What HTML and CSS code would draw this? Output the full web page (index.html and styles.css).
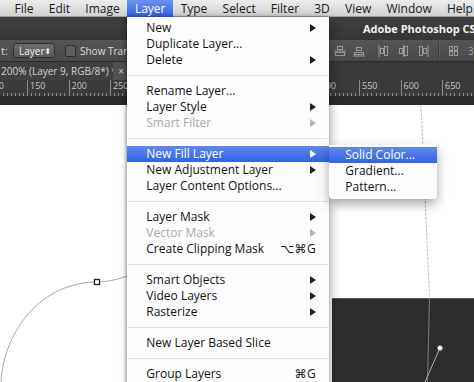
FILE: index.html
```html
<!DOCTYPE html>
<html lang="en">
<head>
    <meta charset="UTF-8">
    <meta name="viewport" content="width=device-width, initial-scale=1.0">
    <title>Photoshop - Layer menu</title>
    <link rel="stylesheet" href="styles.css">
</head>
<body>
    <div class="menubar">
        <span class="menubar-item">File</span>
        <span class="menubar-item">Edit</span>
        <span class="menubar-item">Image</span>
        <span class="menubar-item active">Layer
            <div class="dropdown">
                <div class="menu-item">New<i class="arrow"></i></div>
                <div class="menu-item">Duplicate Layer...</div>
                <div class="menu-item">Delete<i class="arrow"></i></div>
                <div class="menu-sep"></div>
                <div class="menu-item">Rename Layer...</div>
                <div class="menu-item">Layer Style<i class="arrow"></i></div>
                <div class="menu-item disabled">Smart Filter<i class="arrow"></i></div>
                <div class="menu-sep"></div>
                <div class="menu-item selected">New Fill Layer<i class="arrow"></i>
                    <div class="submenu">
                        <div class="menu-item selected">Solid Color...</div>
                        <div class="menu-item">Gradient...</div>
                        <div class="menu-item">Pattern...</div>
                    </div>
                </div>
                <div class="menu-item">New Adjustment Layer<i class="arrow"></i></div>
                <div class="menu-item">Layer Content Options...</div>
                <div class="menu-sep"></div>
                <div class="menu-item">Layer Mask<i class="arrow"></i></div>
                <div class="menu-item disabled">Vector Mask<i class="arrow"></i></div>
                <div class="menu-item">Create Clipping Mask<span class="shortcut">⌥⌘G</span></div>
                <div class="menu-sep"></div>
                <div class="menu-item">Smart Objects<i class="arrow"></i></div>
                <div class="menu-item">Video Layers<i class="arrow"></i></div>
                <div class="menu-item">Rasterize<i class="arrow"></i></div>
                <div class="menu-sep"></div>
                <div class="menu-item">New Layer Based Slice</div>
                <div class="menu-sep"></div>
                <div class="menu-item">Group Layers<span class="shortcut">⌘G</span></div>
            </div>
        </span>
        <span class="menubar-item">Type</span>
        <span class="menubar-item">Select</span>
        <span class="menubar-item">Filter</span>
        <span class="menubar-item">3D</span>
        <span class="menubar-item">View</span>
        <span class="menubar-item">Window</span>
        <span class="menubar-item">Help</span>
    </div>

    <div class="titlebar">Adobe Photoshop CS6 Extended</div>

    <div class="options">
        <span class="opt-label">t:</span>
        <span class="opt-select">Layer <span class="updown">⬍</span></span>
        <span class="opt-check"></span>
        <span class="opt-text">Show Transform Controls</span>
        <div class="align-icons">
            <svg width="12" height="12" viewBox="0 0 12 12"><rect x="3.5" y="1.5" width="5" height="3" /><rect x="1.5" y="7.5" width="9" height="3" /><line x1="0" y1="6" x2="12" y2="6" /></svg>
            <svg class="tight" width="12" height="12" viewBox="0 0 12 12"><rect x="3.5" y="2.5" width="5" height="3" /><rect x="1.5" y="7.5" width="9" height="2" /><line x1="0" y1="11" x2="12" y2="11" /></svg>
            <svg class="wide" width="11" height="12" viewBox="0 0 11 12"><line x1="1" y1="0" x2="1" y2="12" /><rect x="2.5" y="3.5" width="3" height="5" /><rect x="6.5" y="1.5" width="3" height="9" /></svg>
            <svg width="11" height="12" viewBox="0 0 11 12"><line x1="5.5" y1="0" x2="5.5" y2="12" /><rect x="1.5" y="3.5" width="3" height="5" /><rect x="6.5" y="1.5" width="3" height="9" /></svg>
            <svg width="11" height="12" viewBox="0 0 11 12"><line x1="10" y1="0" x2="10" y2="12" /><rect x="1.5" y="1.5" width="3" height="9" /><rect x="5.5" y="3.5" width="3" height="5" /></svg>
            <span class="sep"></span>
            <svg width="11" height="12" viewBox="0 0 11 12"><rect x="1.5" y="1.5" width="3" height="4" /><rect x="1.5" y="6.5" width="3" height="4" /><rect x="6.5" y="1.5" width="3" height="4" /><rect x="6.5" y="6.5" width="3" height="4" /></svg>
            <span class="opt-3d">3D Mode:</span>
        </div>
    </div>

    <div class="tabbar">
        <span class="tab">200% (Layer 9, RGB/8*) *</span>
        <span class="tab-close">×</span>
    </div>

    <div class="ruler">
        <span class="ruler-cell first">100</span>
        <span class="ruler-cell">150</span>
        <span class="ruler-cell">200</span>
        <span class="ruler-cell">250</span>
        <span class="ruler-cell">300</span>
        <span class="ruler-cell">350</span>
        <span class="ruler-cell">400</span>
        <span class="ruler-cell">450</span>
        <span class="ruler-cell">500</span>
        <span class="ruler-cell">550</span>
        <span class="ruler-cell">600</span>
        <span class="ruler-cell">650</span>
        <span class="ruler-cell">700</span>
    </div>

    <div class="pasteboard"></div>

    <div class="canvas">
        <svg width="474" height="277" viewBox="0 105 474 277">
            <!-- dark shape layer -->
            <rect x="332" y="298" width="142" height="84" fill="#2d2d2d" />
            <line x1="332" y1="298.5" x2="474" y2="298.5" stroke="#5a5a5a" />
            <!-- path on the left -->
            <path d="M1 382 C4 330 42 282 97 282 C108 282 119 279 130 275" fill="none" stroke="#a8a8a8" />
            <rect x="94.5" y="279.5" width="5" height="5" fill="#fff" stroke="#222" stroke-width="1.3" />
            <!-- path on the right -->
            <path d="M421 105 L429.5 298" fill="none" stroke="#c2c2c2" stroke-dasharray="3 1" />
            <path d="M429.5 298 L427.5 382" fill="none" stroke="#7c7c7c" />
            <line x1="425" y1="382" x2="440" y2="348" stroke="#b0b0b0" />
            <circle cx="440" cy="348" r="2.6" fill="#fff" stroke="#666" stroke-width="0.6" />
        </svg>
    </div>
</body>
</html>
```

FILE: styles.css
```css
* {
    margin: 0;
    padding: 0;
    box-sizing: border-box;
}

body {
    width: 474px;
    height: 382px;
    overflow: hidden;
    background: #fff;
    font-family: 'Open Sans', 'DejaVu Sans', sans-serif;
}

/* mac menu bar */
.menubar {
    display: flex;
    height: 17px;
    padding-left: 7px;
    background: linear-gradient(#ededed, #cfcfcf);
    box-shadow: inset 0 -1px #9d9d9d;
    font-size: 12px;
    font-weight: 500;
    line-height: 17px;
    color: #1a1a1a;
    white-space: nowrap;
    position: relative;
    z-index: 3;
}

.menubar-item {
    padding: 0 7.6px;
    position: relative;
}

.menubar-item.active {
    background: linear-gradient(#6d93f3, #2f5fe2);
    color: white;
}

/* Layer dropdown */
.dropdown {
    position: absolute;
    left: 0;
    top: 17px;
    width: 202px;
    height: 370px;
    padding-top: 3px;
    background: #fdfdfd;
    color: #111;
    box-shadow: -1px 0 3px rgba(0, 0, 0, 0.35), 2px 4px 10px rgba(0, 0, 0, 0.3);
    font-size: 12px;
    font-weight: 500;
    line-height: 16px;
}

.menu-item {
    display: flex;
    justify-content: space-between;
    align-items: center;
    height: 16px;
    padding: 0 13px 0 19px;
    position: relative;
}

.menu-item.disabled {
    color: #a9a9a9;
}

.menu-item.selected {
    background: linear-gradient(#5f88f1, #3163e3);
    color: white;
}

.arrow {
    width: 0;
    height: 0;
    border-left: 6px solid #222;
    border-top: 4px solid transparent;
    border-bottom: 4px solid transparent;
}

.disabled .arrow {
    border-left-color: #b4b4b4;
}

.selected .arrow {
    border-left-color: white;
}

.shortcut {
    letter-spacing: 0.5px;
}

.menu-sep {
    height: 15px;
    border-top: 7px solid transparent;
    background: linear-gradient(#e2e2e2, #e2e2e2) top / 100% 1px no-repeat;
}

.submenu {
    position: absolute;
    left: 202px;
    top: -1px;
    width: 108px;
    padding: 2px 0 4px;
    background: #fdfdfd;
    color: #111;
    box-shadow: 0 5px 12px rgba(0, 0, 0, 0.35);
    border-radius: 0 0 4px 4px;
}

.submenu .menu-item {
    padding: 0 8px 0 16px;
}

/* photoshop chrome */
.titlebar {
    height: 23px;
    padding-left: 363px;
    background: linear-gradient(#3f3f3f, #363636);
    color: #f2f2f2;
    font-size: 11px;
    font-weight: 700;
    line-height: 23px;
    white-space: nowrap;
    overflow: hidden;
}

.options {
    display: flex;
    align-items: center;
    height: 22px;
    padding-left: 1px;
    background: linear-gradient(#555, #4a4a4a);
    border-bottom: 1px solid #2c2c2c;
    color: #ddd;
    font-size: 11px;
    white-space: nowrap;
    overflow: hidden;
}

.options > * {
    flex-shrink: 0;
}

.opt-label {
    width: 12px;
}

.opt-select {
    display: flex;
    justify-content: space-between;
    align-items: center;
    width: 42px;
    height: 15px;
    padding: 0 4px 0 5px;
    background: linear-gradient(#6a6a6a, #5a5a5a);
    border: 1px solid #2e2e2e;
    border-radius: 3px;
    font-size: 10px;
    color: #eee;
}

.updown {
    font-size: 8px;
}

.opt-check {
    width: 11px;
    height: 12px;
    margin-left: 10px;
    background: #5d5d5d;
    border: 1px solid #2e2e2e;
    border-radius: 2px;
}

.opt-text {
    width: 240px;
    margin-left: 4px;
    font-size: 10px;
    overflow: hidden;
}

.align-icons {
    display: flex;
    align-items: center;
    gap: 9px;
    margin-left: 14px;
}

.align-icons > * {
    flex-shrink: 0;
}

.align-icons svg {
    fill: none;
    stroke: #9a9a9a;
    stroke-width: 1;
}

.align-icons .tight {
    margin-left: -2px;
}

.align-icons .wide {
    margin-left: 4px;
}

.align-icons .sep {
    width: 1px;
    height: 16px;
    background: #3a3a3a;
    box-shadow: 1px 0 #5e5e5e;
}

.opt-3d {
    color: #a0a0a0;
    font-size: 10px;
}

.tabbar {
    display: flex;
    height: 18px;
    background: #383838;
    font-size: 10px;
    line-height: 18px;
    color: #d2d2d2;
    white-space: nowrap;
}

.tab {
    width: 113px;
    padding-left: 1px;
    background: #404040;
    overflow: hidden;
}

.tab-close {
    width: 16px;
    background: #515151;
    color: #c8c8c8;
    text-align: center;
}

.ruler {
    display: flex;
    height: 16px;
    background: #3b3b3b;
    overflow: hidden;
}

.ruler-cell {
    flex-shrink: 0;
    width: 41.5px;
    padding-left: 2px;
    border-left: 1px solid #8a8a8a;
    font-size: 9px;
    line-height: 12px;
    color: #c4c4c4;
    background: repeating-linear-gradient(to right, transparent 0 3.15px, #8a8a8a 3.15px 4.15px) bottom left / 100% 3px no-repeat;
}

.ruler-cell.first {
    margin-left: -14.5px;
}

.pasteboard {
    height: 9px;
    background: #2a2a2a;
}

.canvas svg {
    display: block;
}
```
